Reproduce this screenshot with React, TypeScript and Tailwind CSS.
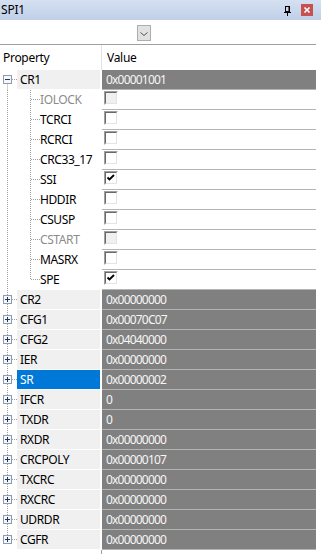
import React from "react";

type Row = {
  name: string;
  kind: "top" | "child";
  value?: string;
  checked?: boolean;
  disabled?: boolean;
  expanded?: boolean;
  selected?: boolean;
};

const rows: Row[] = [
  { name: "CR1", kind: "top", value: "0x00001001", expanded: true },
  { name: "IOLOCK", kind: "child", disabled: true },
  { name: "TCRCI", kind: "child" },
  { name: "RCRCI", kind: "child" },
  { name: "CRC33_17", kind: "child" },
  { name: "SSI", kind: "child", checked: true },
  { name: "HDDIR", kind: "child" },
  { name: "CSUSP", kind: "child" },
  { name: "CSTART", kind: "child", disabled: true },
  { name: "MASRX", kind: "child" },
  { name: "SPE", kind: "child", checked: true },
  { name: "CR2", kind: "top", value: "0x00000000" },
  { name: "CFG1", kind: "top", value: "0x00070C07" },
  { name: "CFG2", kind: "top", value: "0x04040000" },
  { name: "IER", kind: "top", value: "0x00000000" },
  { name: "SR", kind: "top", value: "0x00000002", selected: true },
  { name: "IFCR", kind: "top", value: "0" },
  { name: "TXDR", kind: "top", value: "0" },
  { name: "RXDR", kind: "top", value: "0x00000000" },
  { name: "CRCPOLY", kind: "top", value: "0x00000107" },
  { name: "TXCRC", kind: "top", value: "0x00000000" },
  { name: "RXCRC", kind: "top", value: "0x00000000" },
  { name: "UDRDR", kind: "top", value: "0x00000000" },
  { name: "CGFR", kind: "top", value: "0x00000000" },
];

const DOT = "#a0a0a0";

function TopTree({ first, last, expanded }: { first: boolean; last: boolean; expanded?: boolean }) {
  return (
    <svg width="17" height="20" className="shrink-0">
      <line x1="7.5" y1={first ? 9.5 : 0} x2="7.5" y2={last ? 9.5 : 20} stroke={DOT} strokeDasharray="1 1" />
      <line x1="12" y1="9.5" x2="17" y2="9.5" stroke={DOT} strokeDasharray="1 1" />
      <rect x="3.5" y="5.5" width="8" height="8" fill="#f6f7f9" stroke="#8f9bb0" />
      <line x1="5" y1="9.5" x2="10" y2="9.5" stroke="#1f3763" />
      {!expanded && <line x1="7.5" y1="7" x2="7.5" y2="12" stroke="#1f3763" />}
    </svg>
  );
}

function ChildTree({ last }: { last: boolean }) {
  return (
    <svg width="40" height="20" className="shrink-0">
      <line x1="7.5" y1="0" x2="7.5" y2="20" stroke={DOT} strokeDasharray="1 1" />
      <line x1="30.5" y1="0" x2="30.5" y2={last ? 9.5 : 20} stroke={DOT} strokeDasharray="1 1" />
      <line x1="31" y1="9.5" x2="40" y2="9.5" stroke={DOT} strokeDasharray="1 1" />
    </svg>
  );
}

function CheckBox({ checked, disabled }: { checked?: boolean; disabled?: boolean }) {
  return (
    <div className="ml-[2px] mt-[1px] w-[14px] h-[14px] border-t border-l border-[#a0a0a0] border-b border-r border-b-white border-r-white">
      <div
        className={`w-[12px] h-[12px] border-t border-l border-[#696969] border-b border-r border-b-[#e3e3e3] border-r-[#e3e3e3] ${
          disabled ? "bg-[#f0f0f0]" : "bg-white"
        }`}
      >
        {checked && (
          <svg width="10" height="10" viewBox="0 0 10 10">
            <polyline points="1.5,4.5 3.5,6.5 8,2" fill="none" stroke="#000" strokeWidth="1.8" />
          </svg>
        )}
      </div>
    </div>
  );
}

export default function App() {
  const childIdx = rows.map((r, i) => (r.kind === "child" ? i : -1)).filter((i) => i >= 0);
  const lastChild = childIdx[childIdx.length - 1];
  const lastTop = rows.length - 1;
  return (
    <div
      className="w-[321px] h-[554px] bg-white overflow-hidden flex flex-col text-black"
      style={{ fontFamily: '"Noto Sans", "Open Sans", sans-serif' }}
    >
      {/* Title bar */}
      <div className="h-[20px] shrink-0 flex items-center bg-gradient-to-b from-[#d5e1f2] to-[#bfcfe8] pl-[1px] pr-[8px]">
        <span className="text-[12px] leading-none tracking-[-0.2px]">SPI1</span>
        <div className="flex-1" />
        <svg width="8" height="10" viewBox="0 0 8 10" className="mr-[9px] mt-[1px]">
          <rect x="1.5" y="0.5" width="4" height="5" fill="none" stroke="#000" />
          <line x1="5" y1="0" x2="5" y2="6" stroke="#000" strokeWidth="1" />
          <line x1="0" y1="6.5" x2="7" y2="6.5" stroke="#000" />
          <line x1="3.5" y1="6" x2="3.5" y2="10" stroke="#000" />
        </svg>
        <div className="w-[12px] h-[12px] bg-[#c75050] flex items-center justify-center">
          <svg width="8" height="8" viewBox="0 0 8 8">
            <line x1="1.5" y1="1.5" x2="6.5" y2="6.5" stroke="#fff" strokeWidth="1.6" />
            <line x1="6.5" y1="1.5" x2="1.5" y2="6.5" stroke="#fff" strokeWidth="1.6" />
          </svg>
        </div>
      </div>

      {/* Toolbar */}
      <div className="h-[24px] shrink-0 flex items-start pt-[5px] pl-[137px]">
        <div className="w-[14px] h-[16px] bg-[#e1e1e1] border border-[#adadad] flex items-start">
          <svg width="12" height="14" viewBox="0 0 12 14">
            <polyline points="2.5,6.5 6,9.5 9.5,6.5" fill="none" stroke="#555" strokeWidth="1" />
          </svg>
        </div>
      </div>
      <div className="h-px w-[316px] shrink-0 bg-[#a0a0a0]" />

      {/* Header */}
      <div className="h-[25px] shrink-0 flex text-[12px]">
        <div className="w-[101px] flex items-center pl-[3px] tracking-[-0.3px]">Property</div>
        <div className="w-px bg-[#e3e3e3]" />
        <div className="w-[214px] flex items-center pl-[5px] tracking-[-0.3px]">Value</div>
      </div>

      {/* Rows */}
      <div className="flex flex-col">
        {rows.map((r, i) => {
          const isTop = r.kind === "top";
          return (
            <div key={r.name} className="h-[20px] flex shrink-0">
              <div className="w-[100px] h-[20px] flex">
                {isTop ? (
                  <TopTree first={i === 0} last={i === lastTop} expanded={r.expanded} />
                ) : (
                  <ChildTree last={i === lastChild} />
                )}
                <div
                  className={`flex-1 h-[19px] flex items-center text-[12px] tracking-[-0.4px] whitespace-nowrap ${
                    isTop ? "pl-[3px]" : "pl-0"
                  } ${
                    r.selected
                      ? "bg-[#0078d7] text-white"
                      : isTop
                      ? "bg-[#f0f0f0]"
                      : "bg-white"
                  } ${r.disabled ? "text-[#8c8c8c]" : ""}`}
                >
                  {r.name}
                </div>
              </div>
              <div className="w-[2px]" />
              <div
                className={`w-[214px] h-[20px] border-b border-[#b4b4b4] flex ${
                  isTop ? "bg-[#808080] items-center" : "bg-white items-start"
                }`}
              >
                {isTop ? (
                  <span className="pl-[4px] text-[12px] tracking-[-0.8px] text-[#f6f6f6]">{r.value}</span>
                ) : (
                  <CheckBox checked={r.checked} disabled={r.disabled} />
                )}
              </div>
            </div>
          );
        })}
      </div>

      {/* Filler */}
      <div className="flex-1 flex">
        <div className="w-[101px]" />
        <div className="w-px bg-[#a0a0a0]" />
      </div>
    </div>
  );
}
